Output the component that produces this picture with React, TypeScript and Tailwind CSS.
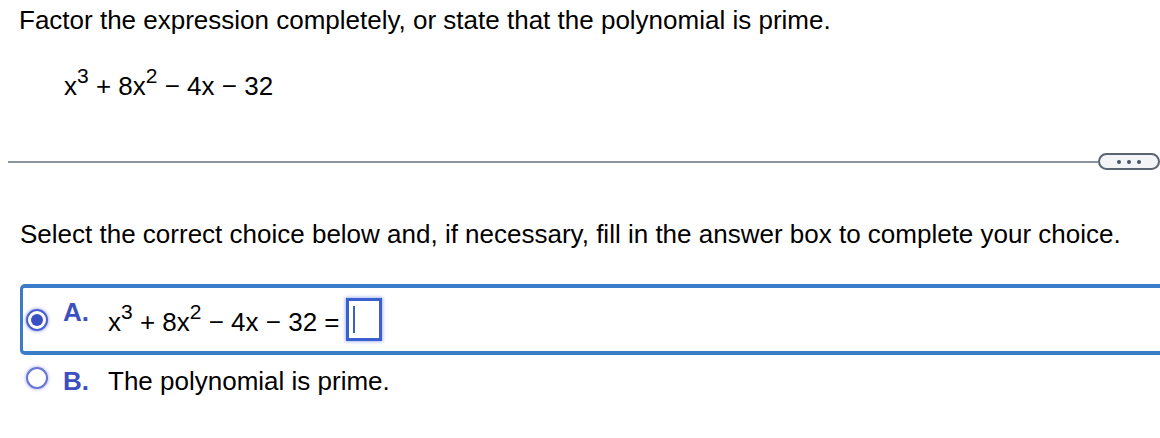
import React from 'react';

function Sup({ children }: { children: React.ReactNode }) {
  return <span className="relative -top-[12px] text-[21px] leading-none">{children}</span>;
}

function Expr() {
  return (
    <span className="whitespace-pre">
      x<Sup>3</Sup> + 8x<Sup>2</Sup> − 4x − 32
    </span>
  );
}

function Radio({ checked }: { checked?: boolean }) {
  return (
    <span
      className={
        checked
          ? 'flex items-center justify-center w-[22px] h-[22px] rounded-full bg-white border-2 border-[#4b5fd0] shadow-[0_0_3px_1px_rgba(90,110,220,0.45)]'
          : 'flex items-center justify-center w-[22px] h-[22px] rounded-full bg-white border-2 border-[#6675d6] shadow-[0_0_3px_1px_rgba(110,125,220,0.4)]'
      }
    >
      {checked && <span className="w-[12px] h-[12px] rounded-full bg-[#3b4fc4]" />}
    </span>
  );
}

export default function App() {
  return (
    <div className="min-h-screen w-full overflow-hidden bg-white text-black font-['Liberation_Sans',Arial,sans-serif] text-[26px] leading-[30px]">
      <p className="pl-[19px] pt-[5px]">Factor the expression completely, or state that the polynomial is prime.</p>

      <p className="pl-[64px] mt-[36px]">
        <Expr />
      </p>

      <div className="flex items-center pl-[8px] mt-[52px] h-[17px]">
        <div className="flex-1 h-[2px] bg-[#8a93a0]" />
        <button className="flex items-center justify-center gap-[6px] w-[62px] h-[17px] rounded-full border-2 border-[#5b6472] bg-[#f2f4f7]">
          <span className="w-[4px] h-[4px] rounded-full bg-[#4b5563]" />
          <span className="w-[4px] h-[4px] rounded-full bg-[#4b5563]" />
          <span className="w-[4px] h-[4px] rounded-full bg-[#4b5563]" />
        </button>
      </div>

      <p className="pl-[20px] mt-[49px]">
        Select the correct choice below and, if necessary, fill in the answer box to complete your choice.
      </p>

      <div className="ml-[20px] mr-[-12px] mt-[35px] h-[71px] flex items-center pl-[3px] border-y-4 border-l-[3px] border-[#3a7cc8] rounded-[5px]">
        <Radio checked />
        <span className="ml-[15px] mb-[16px] font-bold text-[#3c50c0]">A.</span>
        <span className="ml-[19px] mt-[4px]">
          <Expr /> =
        </span>
        <span className="ml-[6px] flex w-[36px] h-[43px] pl-[4px] py-[5px] border-[3px] border-[#3a5fd0] shadow-[0_0_3px_1px_rgba(70,100,220,0.45)] bg-white">
          <span className="w-[2px] h-full bg-[#3a5fd0]" />
        </span>
      </div>

      <div className="flex items-center pl-[26px] mt-[11px]">
        <span className="mb-[6px]">
          <Radio />
        </span>
        <span className="ml-[15px] font-bold text-[#3c50c0]">B.</span>
        <span className="ml-[19px]">The polynomial is prime.</span>
      </div>
    </div>
  );
}
